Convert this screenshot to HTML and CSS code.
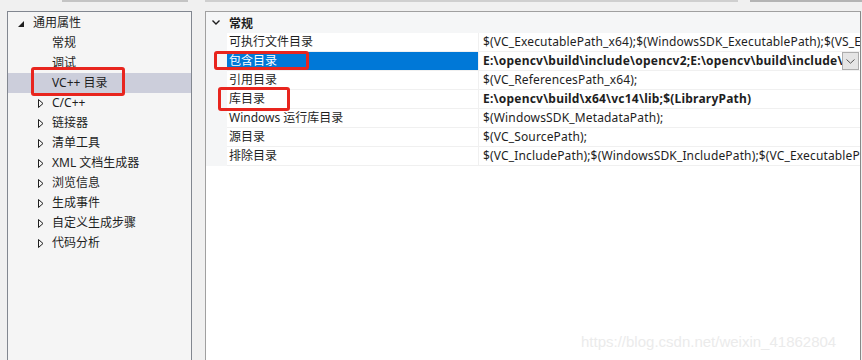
FILE: index.html
```html
<!DOCTYPE html>
<html lang="zh-CN">
<head>
  <meta charset="UTF-8">
  <title>VC++ 目录</title>
  <link rel="stylesheet" href="styles.css">
</head>
<body>

<div class="top-strip">
  <span class="strip strip-a"></span>
  <span class="strip strip-b"></span>
  <span class="strip strip-c"></span>
</div>

<div class="dialog">
  <!-- left: configuration tree -->
  <div class="tree">
    <div class="tree-row">
      <svg class="tri-open" width="6" height="6" viewBox="0 0 6 6"><polygon points="6,0 6,6 0,6" fill="#1e1e1e"/></svg>
      <span>通用属性</span>
    </div>
    <div class="tree-row child">常规</div>
    <div class="tree-row child">调试</div>
    <div class="tree-row child selected">VC++ 目录</div>
    <div class="tree-row child"><svg class="tri" width="6" height="9" viewBox="0 0 6 9"><polygon points="0.5,0.5 5,4.5 0.5,8.5" fill="none" stroke="#1e1e1e"/></svg>C/C++</div>
    <div class="tree-row child"><svg class="tri" width="6" height="9" viewBox="0 0 6 9"><polygon points="0.5,0.5 5,4.5 0.5,8.5" fill="none" stroke="#1e1e1e"/></svg>链接器</div>
    <div class="tree-row child"><svg class="tri" width="6" height="9" viewBox="0 0 6 9"><polygon points="0.5,0.5 5,4.5 0.5,8.5" fill="none" stroke="#1e1e1e"/></svg>清单工具</div>
    <div class="tree-row child"><svg class="tri" width="6" height="9" viewBox="0 0 6 9"><polygon points="0.5,0.5 5,4.5 0.5,8.5" fill="none" stroke="#1e1e1e"/></svg>XML 文档生成器</div>
    <div class="tree-row child"><svg class="tri" width="6" height="9" viewBox="0 0 6 9"><polygon points="0.5,0.5 5,4.5 0.5,8.5" fill="none" stroke="#1e1e1e"/></svg>浏览信息</div>
    <div class="tree-row child"><svg class="tri" width="6" height="9" viewBox="0 0 6 9"><polygon points="0.5,0.5 5,4.5 0.5,8.5" fill="none" stroke="#1e1e1e"/></svg>生成事件</div>
    <div class="tree-row child"><svg class="tri" width="6" height="9" viewBox="0 0 6 9"><polygon points="0.5,0.5 5,4.5 0.5,8.5" fill="none" stroke="#1e1e1e"/></svg>自定义生成步骤</div>
    <div class="tree-row child"><svg class="tri" width="6" height="9" viewBox="0 0 6 9"><polygon points="0.5,0.5 5,4.5 0.5,8.5" fill="none" stroke="#1e1e1e"/></svg>代码分析</div>
  </div>

  <!-- right: property grid -->
  <div class="grid">
    <div class="grid-head">
      <svg class="chev" width="8" height="5" viewBox="0 0 8 5"><polyline points="0.5,0.5 4,4 7.5,0.5" fill="none" stroke="#1e1e1e" stroke-width="1.4"/></svg>
      <span>常规</span>
    </div>
    <div class="props">
      <div class="prop">
        <div class="prop-name">可执行文件目录</div>
        <div class="prop-value">$(VC_ExecutablePath_x64);$(WindowsSDK_ExecutablePath);$(VS_ExecutablePath);$(MSBuild_ExecutablePath)</div>
      </div>
      <div class="prop active">
        <div class="prop-name">包含目录</div>
        <div class="prop-value bold">E:\opencv\build\include\opencv2;E:\opencv\build\include\;$(IncludePath)</div>
        <div class="drop-btn">
          <svg width="9" height="5" viewBox="0 0 9 5"><polyline points="0.5,0.5 4.5,4.2 8.5,0.5" fill="none" stroke="#555" stroke-width="1"/></svg>
        </div>
      </div>
      <div class="prop">
        <div class="prop-name">引用目录</div>
        <div class="prop-value">$(VC_ReferencesPath_x64);</div>
      </div>
      <div class="prop">
        <div class="prop-name">库目录</div>
        <div class="prop-value bold">E:\opencv\build\x64\vc14\lib;$(LibraryPath)</div>
      </div>
      <div class="prop">
        <div class="prop-name">Windows 运行库目录</div>
        <div class="prop-value">$(WindowsSDK_MetadataPath);</div>
      </div>
      <div class="prop">
        <div class="prop-name">源目录</div>
        <div class="prop-value">$(VC_SourcePath);</div>
      </div>
      <div class="prop">
        <div class="prop-name">排除目录</div>
        <div class="prop-value">$(VC_IncludePath);$(WindowsSDK_IncludePath);$(VC_ExecutablePath_x64)</div>
      </div>
    </div>
  </div>
</div>

<!-- annotations drawn over the screenshot -->
<div class="mark mark-vc"></div>
<div class="mark mark-include"></div>
<div class="mark mark-lib"></div>
<div class="watermark">https://blog.csdn.net/weixin_41862804</div>

</body>
</html>
```

FILE: styles.css
```css
body {
  margin: 0;
  width: 862px;
  height: 360px;
  overflow: hidden;
  background-color: #f0f0f0;
  font-family: "Noto Sans", "Noto Sans CJK SC", sans-serif;
  font-size: 12px;
  color: #1e1e1e;
  position: relative;
}
.top-strip {
  display: flex;
  height: 2px;
}
.strip {
  display: block;
  height: 2px;
}
.strip-a {
  margin-left: 62px;
  width: 126px;
  background-color: #c4c4c4;
}
.strip-b {
  margin-left: 17px;
  width: 533px;
  background-color: #cfcfcf;
}
.strip-c {
  margin-left: 12px;
  width: 112px;
  background-color: #b4b4b4;
}
.dialog {
  display: flex;
  align-items: flex-start;
  margin-top: 9px;
  padding-left: 7px;
  gap: 13px;
}

/* tree */
.tree {
  width: 183px;
  height: 360px;
  border: 1px solid #828790;
  background-color: #f5f5f5;
}
.tree-row {
  height: 20px;
  line-height: 20px;
  display: flex;
  align-items: center;
  padding-left: 25px;
  white-space: nowrap;
}
.tree-row:first-child {
  margin-top: 1px;
}
.tree-row .tri-open {
  margin-left: -15px;
  margin-right: 9px;
  margin-top: 1px;
}
.tree-row.child {
  padding-left: 44px;
}
.tree-row .tri {
  margin-left: -14px;
  margin-right: 8px;
}
.tree-row.selected {
  background-color: #cccedb;
}

/* property grid */
.grid {
  width: 654px;
  height: 360px;
  border: 1px solid #a0a0a0;
  border-right-color: #888888;
  background-color: #ffffff;
}
.grid-head {
  height: 21px;
  display: flex;
  align-items: center;
  background-color: #f5f6f7;
  font-weight: bold;
}
.grid-head .chev {
  margin-left: 6px;
  margin-right: 9px;
}
.props {
  padding-left: 21px;
  background-color: #f5f6f7;
}
.prop {
  display: flex;
  height: 18px;
  line-height: 18px;
  border-bottom: 1px solid #f0f0f0;
  background-color: #ffffff;
}
.prop-name {
  width: 249px;
  flex-shrink: 0;
  padding-left: 2px;
  border-right: 1px solid #f0f0f0;
  white-space: nowrap;
}
.prop-value {
  flex: 1;
  padding-left: 4px;
  white-space: nowrap;
  overflow: hidden;
  letter-spacing: 0.15px;
}
.prop-value.bold {
  font-weight: bold;
  letter-spacing: 0.22px;
}
.prop.active .prop-name {
  background-color: #0078d7;
  color: #ffffff;
}
.drop-btn {
  width: 15px;
  height: 16px;
  border: 1px solid #adadad;
  background-color: #e5e5e5;
  display: flex;
  align-items: center;
  justify-content: center;
  flex-shrink: 0;
  margin-right: 1px;
}

/* red annotation boxes */
.mark {
  position: absolute;
  border: 3px solid #e8251e;
  border-radius: 3px;
}
.mark-vc {
  left: 31px;
  top: 67px;
  width: 88px;
  height: 23px;
}
.mark-include {
  left: 214px;
  top: 51px;
  width: 89px;
  height: 13px;
}
.mark-lib {
  left: 218px;
  top: 87px;
  width: 66px;
  height: 18px;
}
.watermark {
  position: absolute;
  left: 581px;
  top: 333px;
  font-family: "Liberation Sans", Arial, sans-serif;
  font-size: 15px;
  color: #ebebeb;
}
```
